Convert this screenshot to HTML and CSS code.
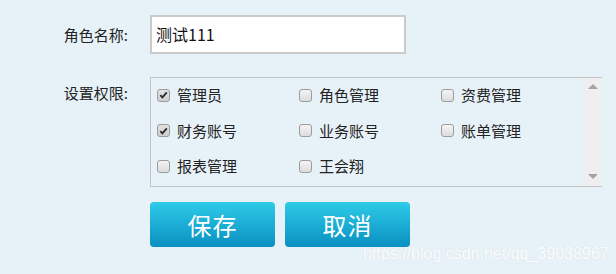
FILE: index.html
```html
<!DOCTYPE html>
<html lang="zh">
<head>
<meta charset="utf-8">
<link rel="stylesheet" href="styles.css">
</head>
<body>
<div class="page">
  <div class="row row-name">
    <label class="lbl">角色名称:</label>
    <div class="input">测试111</div>
  </div>
  <div class="row row-perm">
    <label class="lbl lbl-perm">设置权限:</label>
    <div class="perm-box">
      <div class="perm-grid">
        <div class="item"><span class="cb checked"><svg viewBox="0 0 12 12" width="12" height="12"><path d="M2.5 6.2 L4.8 8.6 L9.6 3.2" fill="none" stroke="#2b2b2b" stroke-width="2"/></svg></span>管理员</div>
        <div class="item"><span class="cb"></span>角色管理</div>
        <div class="item"><span class="cb"></span>资费管理</div>
        <div class="item"><span class="cb checked"><svg viewBox="0 0 12 12" width="12" height="12"><path d="M2.5 6.2 L4.8 8.6 L9.6 3.2" fill="none" stroke="#2b2b2b" stroke-width="2"/></svg></span>财务账号</div>
        <div class="item"><span class="cb"></span>业务账号</div>
        <div class="item"><span class="cb"></span>账单管理</div>
        <div class="item"><span class="cb"></span>报表管理</div>
        <div class="item"><span class="cb"></span>王会翔</div>
      </div>
      <div class="scrollbar">
        <span class="arrow up"></span>
        <span class="arrow down"></span>
      </div>
    </div>
  </div>
  <div class="buttons">
    <button class="btn">保存</button>
    <button class="btn">取消</button>
  </div>
  <div class="watermark">https://blog.csdn.net/qq_39038967</div>
</div>
</body>
</html>
```
FILE: styles.css
```css
html, body {
  margin: 0;
  padding: 0;
  background: #e7f2f8;
}
body {
  width: 616px;
  height: 274px;
  overflow: hidden;
  font-family: "Noto Sans CJK SC", "Liberation Sans", sans-serif;
  color: #222;
}
.page {
  position: relative;
  height: 274px;
  padding-top: 15px;
  box-sizing: border-box;
}
.row {
  display: flex;
}
.row-name {
  align-items: center;
}
.lbl {
  width: 150px;
  box-sizing: border-box;
  padding-right: 22px;
  text-align: right;
  font-size: 15px;
  line-height: 20px;
}
.input {
  width: 256px;
  height: 39px;
  box-sizing: border-box;
  border: 2px solid #cacaca;
  background: #fff;
  font-size: 16px;
  line-height: 35px;
  padding-left: 4px;
  color: #111;
}
.row-perm {
  margin-top: 23px;
}
.lbl-perm {
  padding-top: 6px;
}
.perm-box {
  display: flex;
  width: 452px;
  height: 110px;
  box-sizing: border-box;
  border: 1px solid #c4c4c4;
  border-right: none;
}
.perm-grid {
  flex: 1;
  display: grid;
  grid-template-columns: 142px 142px 142px;
  grid-auto-rows: 35.5px;
  padding-left: 6px;
  padding-top: 0;
}
.item {
  display: flex;
  align-items: center;
  font-size: 15px;
  line-height: 20px;
  padding-bottom: 1px;
}
.cb {
  width: 11px;
  height: 11px;
  border: 1px solid #9c9c9c;
  border-radius: 3px;
  background: linear-gradient(#f4f4f4, #dcdcdc);
  margin-right: 7px;
  display: flex;
  align-items: center;
  justify-content: center;
  flex: none;
}
.cb.checked {
  background: linear-gradient(#e2e2e2, #cfcfcf);
}
.cb svg {
  display: block;
}
.scrollbar {
  width: 21px;
  background: #efefef;
  display: flex;
  flex-direction: column;
  justify-content: space-between;
  align-items: center;
  padding: 6px 0 7px;
  box-sizing: border-box;
}
.arrow {
  width: 0;
  height: 0;
  border-left: 5px solid transparent;
  border-right: 5px solid transparent;
}
.arrow.up {
  border-bottom: 5px solid #a3a3a3;
}
.arrow.down {
  border-top: 5px solid #a3a3a3;
}
.buttons {
  display: flex;
  gap: 10px;
  margin-top: 15px;
  margin-left: 150px;
}
.btn {
  width: 125px;
  height: 45px;
  border: none;
  border-radius: 4px;
  background: linear-gradient(#2ecbe8, #0a90c1);
  color: #fff;
  font-family: "Noto Sans CJK SC", sans-serif;
  font-size: 24px;
  line-height: 45px;
  padding: 0;
  letter-spacing: 1px;
}
.watermark {
  position: absolute;
  left: 363px;
  top: 245px;
  font-family: "Liberation Sans", Arial, sans-serif;
  font-size: 16px;
  line-height: 18px;
  color: rgba(255, 255, 255, 0.95);
  text-shadow: 0 0 1px rgba(150, 150, 150, 0.25);
}
```
